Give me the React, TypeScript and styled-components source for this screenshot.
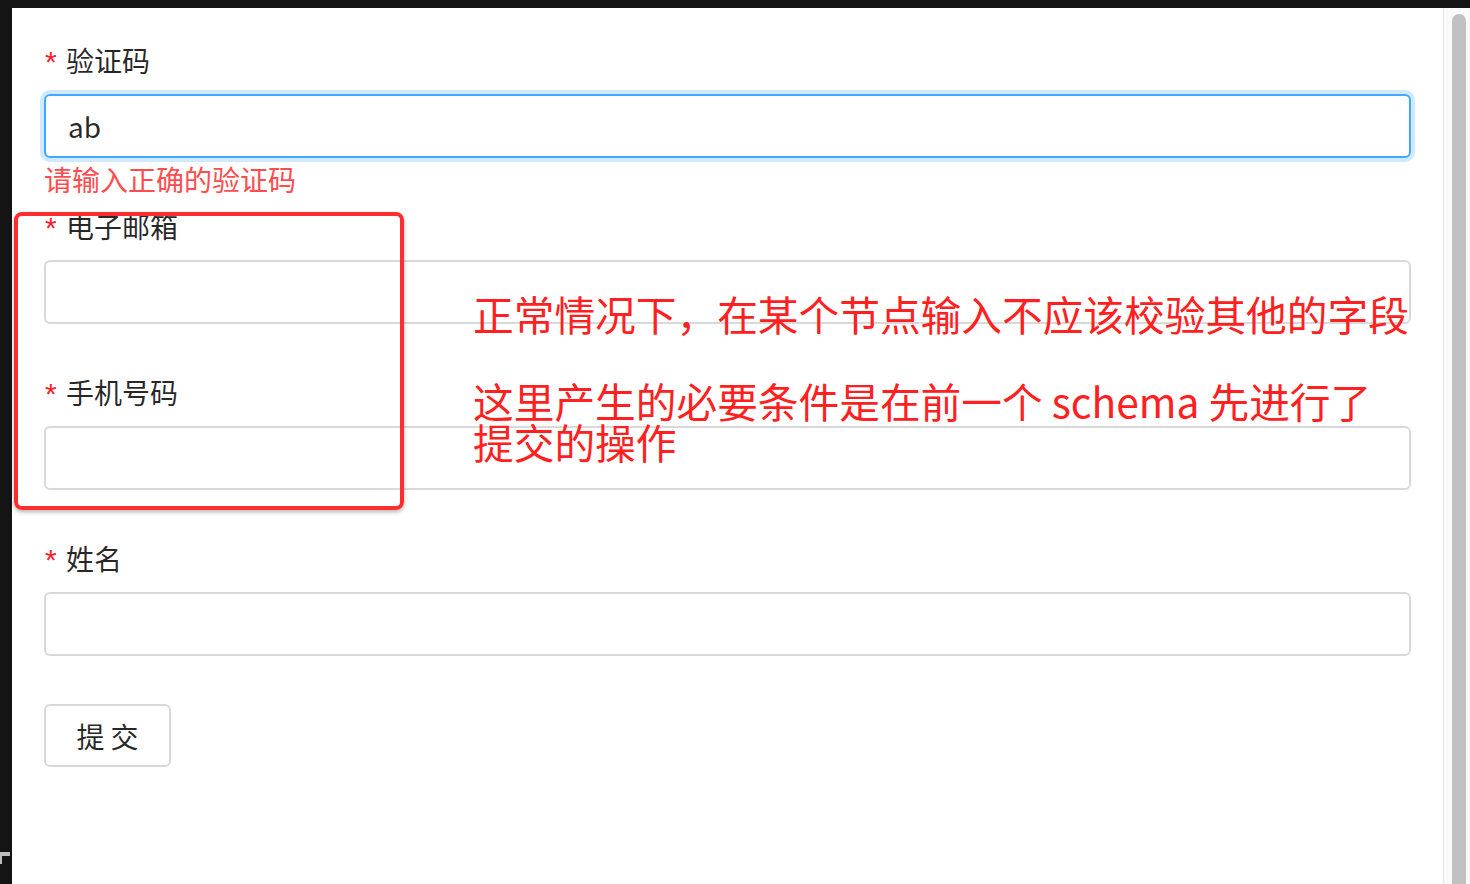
import styled, { createGlobalStyle } from "styled-components";

const GlobalStyle = createGlobalStyle`
html, body {
    margin: 0;
    padding: 0;
    background: #141414;
}
body {
    font-family: "Noto Sans CJK SC", "Noto Sans", sans-serif;
}
`

const Frame = styled.div`
position: relative;
width: 1470px;
height: 884px;
box-sizing: border-box;
padding: 8px 0 0 12px;
background-color: #141414;
overflow: hidden;
`

const Window = styled.div`
display: flex;
height: 100%;
background-color: #ffffff;
`

const Content = styled.form`
flex: 1;
padding: 30px 32px 0 32px;
`

const Item = styled.div`
display: flex;
flex-direction: column;
`

const Label = styled.label`
height: 48px;
line-height: 44px;
margin-bottom: 8px;
font-size: 28px;
color: rgba(0, 0, 0, 0.85);
`

const Asterisk = styled.span`
display: inline-block;
width: 14px;
margin-right: 7px;
margin-left: 1px;
color: #f5222d;
font-family: "Liberation Sans", sans-serif;
font-size: 30px;
`

const Input = styled.input<{ $focused?: boolean }>`
box-sizing: border-box;
height: 64px;
width: 100%;
padding: 0 22px;
border: 2px solid ${p => p.$focused ? "#40a9ff" : "#d9d9d9"};
border-radius: 6px;
box-shadow: ${p => p.$focused ? "0 0 0 4px rgba(24, 144, 255, 0.2)" : "none"};
outline: none;
font-family: "Noto Sans CJK SC", sans-serif;
font-size: 28px;
color: rgba(0, 0, 0, 0.85);
background: #fff;
`

const Help = styled.div`
height: 46px;
line-height: 42px;
font-size: 28px;
color: #ff4d4f;
`

const SubmitButton = styled.button`
box-sizing: border-box;
margin-top: 2px;
width: 127px;
height: 63px;
border: 2px solid #d9d9d9;
border-radius: 6px;
background: #fff;
font-family: "Noto Sans CJK SC", sans-serif;
font-size: 28px;
color: rgba(0, 0, 0, 0.85);
letter-spacing: 6px;
padding: 0 0 0 6px;
`

const Scrollbar = styled.div`
width: 27px;
border-left: 1px solid #e6e6e6;
background-color: #fafafa;
padding: 6px 4px 0 8px;
box-sizing: border-box;
`

const Thumb = styled.div`
height: 100%;
border-radius: 8px 8px 0 0;
background-color: #c1c1c1;
`

// annotation drawn over the screenshot
const Marker = styled.div`
position: absolute;
left: 14px;
top: 212px;
width: 390px;
height: 298px;
box-sizing: border-box;
border: 4px solid #ff2d2d;
border-radius: 8px;
box-shadow: 0 2px 4px rgba(0, 0, 0, 0.3);
`

const Note = styled.div<{ $top: number }>`
position: absolute;
left: 473px;
top: ${p => p.$top}px;
white-space: nowrap;
font-size: 40.7px;
line-height: 41px;
color: #ff2121;
`

const Cursor = styled.div`
position: absolute;
left: 0;
top: 852px;
width: 10px;
height: 4px;
background: #bdbdbd;
&::after {
    content: "";
    position: absolute;
    left: 0;
    top: 4px;
    width: 2px;
    height: 8px;
    background: #bdbdbd;
}
`

interface Field {
    label: string,
    value?: string,
    focused?: boolean,
    error?: string,
}

const fields: Field[] = [
    { label: "验证码", value: "ab", focused: true, error: "请输入正确的验证码" },
    { label: "电子邮箱" },
    { label: "手机号码" },
    { label: "姓名" },
]

function App() {
    return (
        <>
            <GlobalStyle />
            <Frame>
                <Window>
                    <Content onSubmit={e => e.preventDefault()}>
                        {fields.map(f => (
                            <Item key={f.label}>
                                <Label><Asterisk>*</Asterisk>{f.label}</Label>
                                <Input $focused={f.focused} defaultValue={f.value} />
                                <Help>{f.error}</Help>
                            </Item>
                        ))}
                        <SubmitButton>提交</SubmitButton>
                    </Content>
                    <Scrollbar>
                        <Thumb />
                    </Scrollbar>
                </Window>
                <Marker />
                <Note $top={293}>正常情况下，在某个节点输入不应该校验其他的字段</Note>
                <Note $top={380}>这里产生的必要条件是在前一个 schema 先进行了<br />提交的操作</Note>
                <Cursor />
            </Frame>
        </>
    )
}

export default App;
